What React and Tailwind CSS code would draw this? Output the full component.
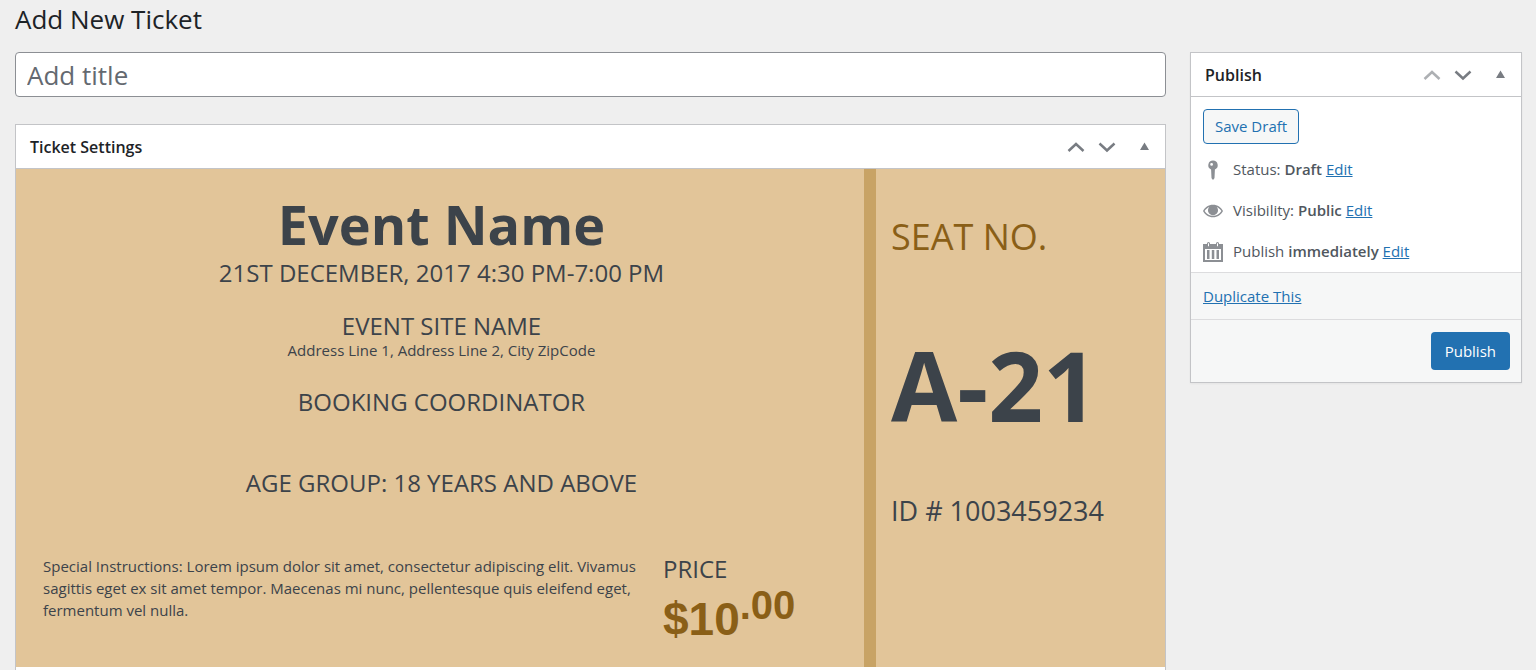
function PinIcon() {
  return (
    <svg viewBox="0 0 20 20" className="size-5 shrink-0 fill-[#8c8f94]">
      <path
        fillRule="evenodd"
        d="M10 .5a4.7 4.7 0 0 1 1.900 9L11.500 18q-.7 1.700-1.500 1.700t-1.500-1.700L8.100 9.500A4.700 4.700 0 0 1 10 .5zM8.600 3a1.400 1.400 0 1 0 0 2.800 1.400 1.400 0 0 0 0-2.800z"
      />
    </svg>
  );
}

function EyeIcon() {
  return (
    <svg viewBox="0 0 20 20" className="size-5 shrink-0 fill-[#8c8f94]">
      <path
        fillRule="evenodd"
        d="M10 3.700c4.600 0 8.200 2.700 10 6.300-1.800 3.600-5.400 6.300-10 6.300S1.800 13.600 0 10c1.800-3.600 5.400-6.300 10-6.300zM6.300 5.900C4.300 6.700 2.700 8.100 1.600 10c1.800 3 4.800 4.800 8.400 4.800s6.600-1.800 8.400-4.800c-1.100-1.900-2.700-3.300-4.700-4.100a5 5 0 1 1-7.400 0z"
      />
      <path
        fillRule="evenodd"
        d="M10 4.600a4.600 4.600 0 1 1 0 9.200 4.600 4.600 0 0 1 0-9.200zM9 5.700a1.800 1.800 0 1 0 0 3.600 1.800 1.800 0 0 0 0-3.600z"
      />
    </svg>
  );
}

function CalendarIcon() {
  return (
    <svg viewBox="0 0 20 20" className="size-5 shrink-0 fill-[#8c8f94]">
      <path
        fillRule="evenodd"
        d="M0 2h4v-.5a1.500 1.500 0 0 1 3 0V2h6v-.5a1.500 1.500 0 0 1 3 0V2h4v18H0zM2 7v11h16V7zM5 1.200v3h1v-3zM14 1.200v3h1v-3z"
      />
      <path d="M4 8h2.500v9H4zM8.800 8h2.500v9H8.800zM13.500 8H16v9h-2.500z" />
    </svg>
  );
}

function Chevron({ d }) {
  return (
    <svg
      viewBox="0 0 24 24"
      className="size-6 fill-none stroke-current"
      strokeWidth="2.5"
    >
      <path d={d} />
    </svg>
  );
}

function PanelHeader({ title, first }) {
  return (
    <div className="flex h-11 items-center justify-between border-b border-[#c3c4c7] px-3.5 text-[#787c82]">
      <h2 className="text-base font-semibold text-[#1d2327]">{title}</h2>
      <div className="flex items-center">
        <button aria-label="Move up" className={first ? "opacity-60" : ""}>
          <Chevron d="M4.500 16L12 9l7.500 7" />
        </button>
        <button aria-label="Move down" className="ml-[7px]">
          <Chevron d="M4.500 8.500L12 15.500l7.500-7" />
        </button>
        <button aria-label="Toggle panel" className="ml-5">
          <svg viewBox="0 0 12 12" className="size-3 fill-current">
            <path d="M5.500 1.500L10 9H1z" />
          </svg>
        </button>
      </div>
    </div>
  );
}

function PublishRow({ icon, label, value }) {
  return (
    <div className="flex items-center gap-2.5">
      {icon}
      <p>
        {label} <span className="font-semibold">{value}</span>{" "}
        <a href="#" className="text-[#2271b1] underline">
          Edit
        </a>
      </p>
    </div>
  );
}

function Ticket() {
  return (
    <div className="flex bg-[#e2c599] text-[#3c434a]">
      <div className="flex-1 pt-6 pr-6 pb-5 pl-[27px] text-center">
        <h1 className="text-[54px] leading-[62px] font-bold">Event Name</h1>
        <p className="mt-1 text-2xl leading-7">
          21ST DECEMBER, 2017 4:30 PM-7:00 PM
        </p>
        <p className="mt-[25px] text-2xl leading-7">EVENT SITE NAME</p>
        <p className="leading-5">
          Address Line 1, Address Line 2, City ZipCode
        </p>
        <p className="mt-7 text-2xl leading-7">BOOKING COORDINATOR</p>
        <p className="mt-[53px] text-2xl leading-7">
          AGE GROUP: 18 YEARS AND ABOVE
        </p>
        <div className="mt-[58px] flex text-left">
          <p className="w-[600px] leading-[22px]">
            Special Instructions: Lorem ipsum dolor sit amet, consectetur
            adipiscing elit. Vivamus sagittis eget ex sit amet tempor. Maecenas
            mi nunc, pellentesque quis eleifend eget, fermentum vel nulla.
          </p>
          <div className="pl-5">
            <p className="text-2xl leading-7">PRICE</p>
            <p className="mt-2 flex items-start font-['Liberation_Sans',sans-serif] text-[46px] leading-14 font-bold text-[#8a5f17]">
              $10<span className="text-[40px] leading-7">.00</span>
            </p>
          </div>
        </div>
      </div>
      <div className="w-3 bg-[#c8a365]" />
      <div className="w-[289px] pt-11 pl-[15px]">
        <p className="text-4xl leading-12 text-[#8a5f17]">SEAT NO.</p>
        <p className="mt-19 text-[96px] leading-24 font-bold">A-21</p>
        <p className="mt-[58px] text-[27px] leading-10">ID # 1003459234</p>
      </div>
    </div>
  );
}

export default function App() {
  return (
    <div className="min-h-screen overflow-hidden bg-[#efefef] pr-3.5 pl-[15px] font-['Open_Sans',sans-serif] text-[15px] leading-[21px] text-[#50575e]">
      <h1 className="pt-[3px] text-[26px] leading-8 text-[#1d2327]">
        Add New Ticket
      </h1>
      <div className="mt-[17px] flex items-start gap-6">
        <main className="min-w-0 flex-1">
          <input
            type="text"
            aria-label="Add title"
            placeholder="Add title"
            className="block h-[45px] w-full rounded-sm border border-[#8c8f94] bg-white px-[11px] text-[26px] placeholder:text-[#646970]"
          />
          <section className="mt-[27px] border border-[#c3c4c7] bg-white">
            <PanelHeader title="Ticket Settings" />
            <Ticket />
            <div className="h-4" />
          </section>
        </main>
        <aside className="w-[332px] border border-[#c3c4c7] bg-white shadow-xs">
          <PanelHeader title="Publish" first />
          <div className="px-3 pt-3 pb-2.5">
            <button className="h-[35px] rounded-sm border border-[#2271b1] bg-[#f6f7f7] px-[11px] text-[#2271b1]">
              Save Draft
            </button>
            <div className="mt-[15px] flex flex-col gap-5">
              <PublishRow icon={<PinIcon />} label="Status:" value="Draft" />
              <PublishRow
                icon={<EyeIcon />}
                label="Visibility:"
                value="Public"
              />
              <PublishRow
                icon={<CalendarIcon />}
                label="Publish"
                value="immediately"
              />
            </div>
          </div>
          <div className="border-t border-[#dcdcde] bg-[#f6f7f7] px-3 pt-[13px] pb-3">
            <a href="#" className="text-[#2271b1] underline">
              Duplicate This
            </a>
          </div>
          <div className="flex justify-end border-t border-[#dcdcde] bg-[#f6f7f7] px-[11px] py-3">
            <button className="h-[38px] rounded-sm bg-[#2271b1] px-3.5 text-white">
              Publish
            </button>
          </div>
        </aside>
      </div>
    </div>
  );
}
